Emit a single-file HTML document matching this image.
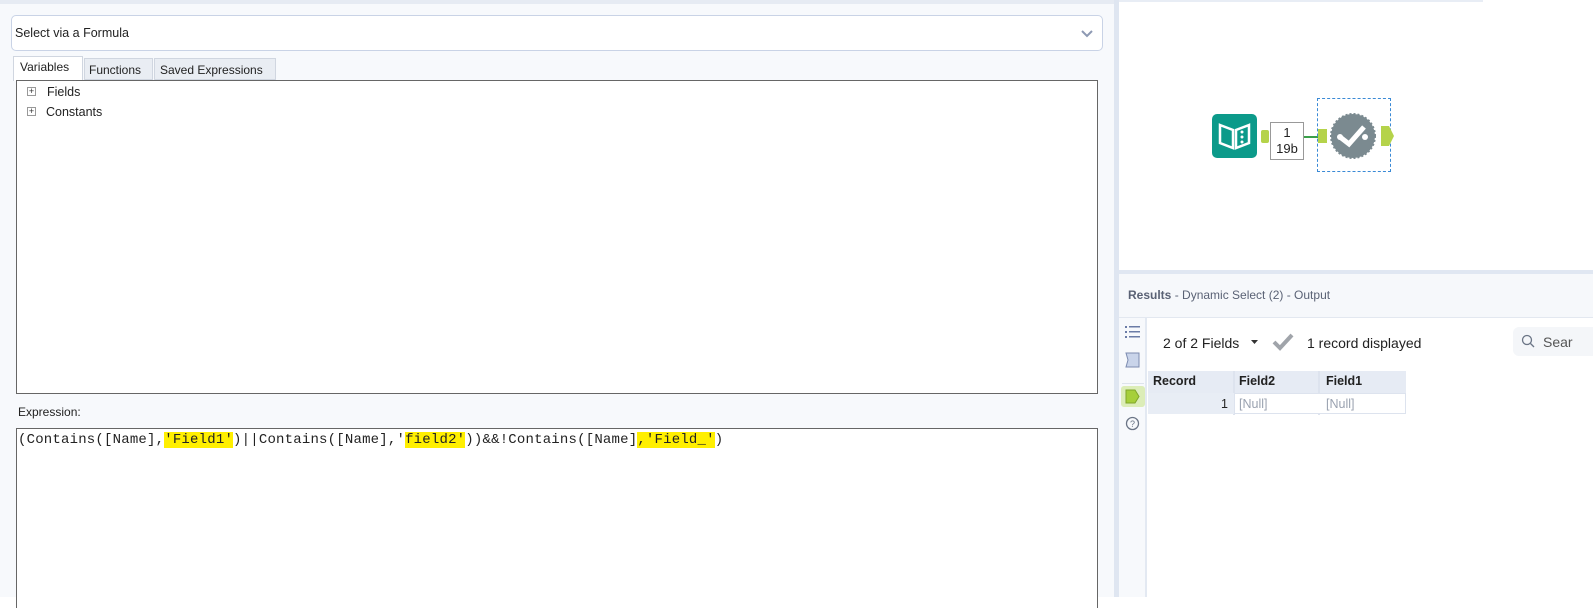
<!DOCTYPE html>
<html><head><meta charset="utf-8"><style>
*{box-sizing:border-box;margin:0;padding:0}
body{width:1593px;height:597px;overflow:hidden;background:#fff;font-family:"Liberation Sans",sans-serif;font-size:12px;color:#222;position:relative}
.abs{position:absolute}
</style></head><body>
<!-- left panel -->
<div class="abs" style="left:0;top:0;width:1115px;height:597px;background:#f7f9fc"></div>
<div class="abs" style="left:0;top:0;width:1115px;height:4px;background:#e6ebf3"></div>
<div class="abs" style="left:11px;top:15px;width:1092px;height:36px;background:#fff;border:1px solid #c9d3e6;border-radius:5px"></div>
<div class="abs" style="left:15px;top:26px;font-size:12.5px">Select via a Formula</div>
<svg class="abs" style="left:1080px;top:29px" width="14" height="10"><path d="M2 2l5 5 5-5" fill="none" stroke="#8d99b3" stroke-width="2"/></svg>
<!-- tabs -->
<div class="abs" style="left:13px;top:56px;width:70px;height:25px;background:#fff;border:1px solid #d0d6e0;border-bottom:none"></div>
<div class="abs" style="left:20px;top:60px;font-size:12px">Variables</div>
<div class="abs" style="left:84px;top:58px;width:69px;height:22px;background:#e9edf3;border:1px solid #d0d6e0"></div>
<div class="abs" style="left:89px;top:63px;font-size:12px">Functions</div>
<div class="abs" style="left:154px;top:58px;width:122px;height:22px;background:#e9edf3;border:1px solid #d0d6e0"></div>
<div class="abs" style="left:160px;top:63px;font-size:12px">Saved Expressions</div>
<div class="abs" style="left:16px;top:80px;width:1082px;height:314px;background:#fff;border:1px solid #666"></div>
<div class="abs" style="left:27px;top:87px;width:9px;height:9px;border:1px solid #999;font-size:9px;line-height:7px;text-align:center;color:#333">+</div>
<div class="abs" style="left:47px;top:85px;font-size:12.5px">Fields</div>
<div class="abs" style="left:27px;top:107px;width:9px;height:9px;border:1px solid #999;font-size:9px;line-height:7px;text-align:center;color:#333">+</div>
<div class="abs" style="left:46px;top:105px;font-size:12.5px">Constants</div>
<div class="abs" style="left:18px;top:405px;font-size:12px">Expression:</div>
<div class="abs" style="left:16px;top:428px;width:1082px;height:180px;background:#fff;border:1px solid #666;border-bottom:none"></div>
<div class="abs" style="left:18px;top:432px;font-family:'Liberation Mono',monospace;font-size:14px;white-space:pre;letter-spacing:0.2px">(Contains([Name],<span style="background:#ffef00">'Field1'</span>)||Contains([Name],'<span style="background:#ffef00">field2'</span>))&amp;&amp;!Contains([Name]<span style="background:#ffef00">,'Field_'</span>)</div>
<!-- divider -->
<div class="abs" style="left:1114px;top:0;width:5px;height:597px;background:#dfe6f1"></div>
<!-- top strip -->
<div class="abs" style="left:1119px;top:0;width:364px;height:2px;background:#e8edf5"></div>
<!-- canvas workflow -->
<div class="abs" style="left:1212px;top:114px;width:45px;height:44px;background:#0c9a8a;border-radius:5px"></div>
<svg class="abs" style="left:1216px;top:118px" width="38" height="36"><path d="M4 7 L17 12 L17 30 L4 25 Z M33 7 L20 12 L20 30 L33 25 Z" fill="none" stroke="#fff" stroke-width="2.5"/><circle cx="26" cy="14" r="1.5" fill="#fff"/><circle cx="26" cy="19" r="1.5" fill="#fff"/><circle cx="26" cy="24" r="1.5" fill="#fff"/></svg>
<div class="abs" style="left:1261px;top:130px;width:8px;height:13px;background:#b5d34a;border-radius:2px"></div>
<div class="abs" style="left:1270px;top:122px;width:34px;height:38px;background:#fff;border:1px solid #999;text-align:center;font-size:13px;line-height:16px;padding-top:2px">1<br>19b</div>
<div class="abs" style="left:1304px;top:136px;width:14px;height:2px;background:#3aa04a"></div>
<div class="abs" style="left:1317px;top:98px;width:74px;height:74px;border:1px dashed #3a8ad6"></div>
<div class="abs" style="left:1318px;top:129px;width:9px;height:14px;background:#b5d34a"></div>
<svg class="abs" style="left:1329px;top:112px" width="48" height="48"><circle cx="24" cy="24" r="22" fill="#7b8a90" stroke="#7b8a90" stroke-width="2" stroke-dasharray="2 2"/><path d="M11 25 L20 32 L35 15" fill="none" stroke="#fff" stroke-width="5"/><circle cx="11" cy="25" r="3" fill="#fff"/><circle cx="36" cy="25" r="3" fill="#fff"/></svg>
<svg class="abs" style="left:1381px;top:125px" width="14" height="22"><path d="M0 1 H8 L13 11 L8 21 H0 Z" fill="#b5d34a"/></svg>
<!-- results panel -->
<div class="abs" style="left:1119px;top:270px;width:474px;height:4px;background:#e0e7f2"></div>
<div class="abs" style="left:1119px;top:274px;width:474px;height:44px;background:#f6f8fb;border-bottom:1px solid #e3e8f0"></div>
<div class="abs" style="left:1128px;top:288px;font-size:12px;color:#5a6275"><b>Results</b> - Dynamic Select (2) - Output</div>
<div class="abs" style="left:1119px;top:318px;width:28px;height:279px;background:#f7f9fc;border-right:2px solid #e3e9f2"></div>
<svg class="abs" style="left:1125px;top:325px" width="16" height="14"><g fill="#6b7ca6"><rect x="0" y="1" width="2" height="2"/><rect x="4" y="1" width="11" height="1.5"/><rect x="0" y="6" width="2" height="2"/><rect x="4" y="6" width="11" height="1.5"/><rect x="0" y="11" width="2" height="2"/><rect x="4" y="11" width="11" height="1.5"/></g></svg>
<svg class="abs" style="left:1125px;top:352px" width="16" height="16"><path d="M1 1 H14 V15 H1 L3 8 Z" fill="#c9d4ea" stroke="#7d8cb0"/></svg>
<div class="abs" style="left:1122px;top:383px;width:22px;height:1px;background:#dde3ec"></div>
<div class="abs" style="left:1121px;top:386px;width:24px;height:21px;background:#dcedb8;border-radius:3px"></div>
<svg class="abs" style="left:1125px;top:389px" width="16" height="15"><path d="M1 1 H10 L14 7.5 L10 14 H1 Z" fill="#a6cf3a" stroke="#7fa52a"/></svg>
<svg class="abs" style="left:1125px;top:416px" width="15" height="15"><circle cx="7.5" cy="7.5" r="6" fill="none" stroke="#6b7586" stroke-width="1.3"/><text x="7.5" y="11" font-size="9" text-anchor="middle" fill="#6b7586" font-family="Liberation Sans">?</text></svg>
<div class="abs" style="left:1148px;top:318px;width:445px;height:52px;background:#fff"></div>
<div class="abs" style="left:1163px;top:335px;font-size:14px;color:#222">2 of 2 Fields</div>
<svg class="abs" style="left:1251px;top:340px" width="8" height="6"><path d="M0 0 H7 L3.5 4 Z" fill="#333"/></svg>
<svg class="abs" style="left:1272px;top:333px" width="22" height="18"><path d="M2 9 L8 15 L20 2" fill="none" stroke="#a0a4aa" stroke-width="4"/></svg>
<div class="abs" style="left:1307px;top:335px;font-size:14px;color:#222">1 record displayed</div>
<div class="abs" style="left:1513px;top:327px;width:90px;height:29px;background:#f4f6f9;border-radius:6px"></div>
<svg class="abs" style="left:1521px;top:334px" width="14" height="14"><circle cx="6" cy="6" r="4.5" fill="none" stroke="#6b7586" stroke-width="1.3"/><path d="M9.5 9.5 L13 13" stroke="#6b7586" stroke-width="1.3"/></svg>
<div class="abs" style="left:1543px;top:334px;font-size:14px;color:#555">Sear</div>
<!-- table -->
<div class="abs" style="left:1148px;top:371px;width:258px;height:22px;background:#e6ebf4"></div>
<div class="abs" style="left:1233px;top:371px;width:2px;height:44px;background:#dde3ee"></div>
<div class="abs" style="left:1318px;top:371px;width:2px;height:44px;background:#dde3ee"></div>
<div class="abs" style="left:1153px;top:374px;font-weight:bold;font-size:12.5px">Record</div>
<div class="abs" style="left:1239px;top:374px;font-weight:bold;font-size:12.5px">Field2</div>
<div class="abs" style="left:1326px;top:374px;font-weight:bold;font-size:12.5px">Field1</div>
<div class="abs" style="left:1148px;top:393px;width:86px;height:21px;background:#e8edf5"></div>
<div class="abs" style="left:1235px;top:393px;width:171px;height:21px;background:#fff;border:1px solid #dde3ee;border-left:none"></div>
<div class="abs" style="left:1221px;top:397px;font-size:12.5px">1</div>
<div class="abs" style="left:1239px;top:397px;font-size:12.5px;color:#9aa2b0">[Null]</div>
<div class="abs" style="left:1326px;top:397px;font-size:12.5px;color:#9aa2b0">[Null]</div>
</body></html>
